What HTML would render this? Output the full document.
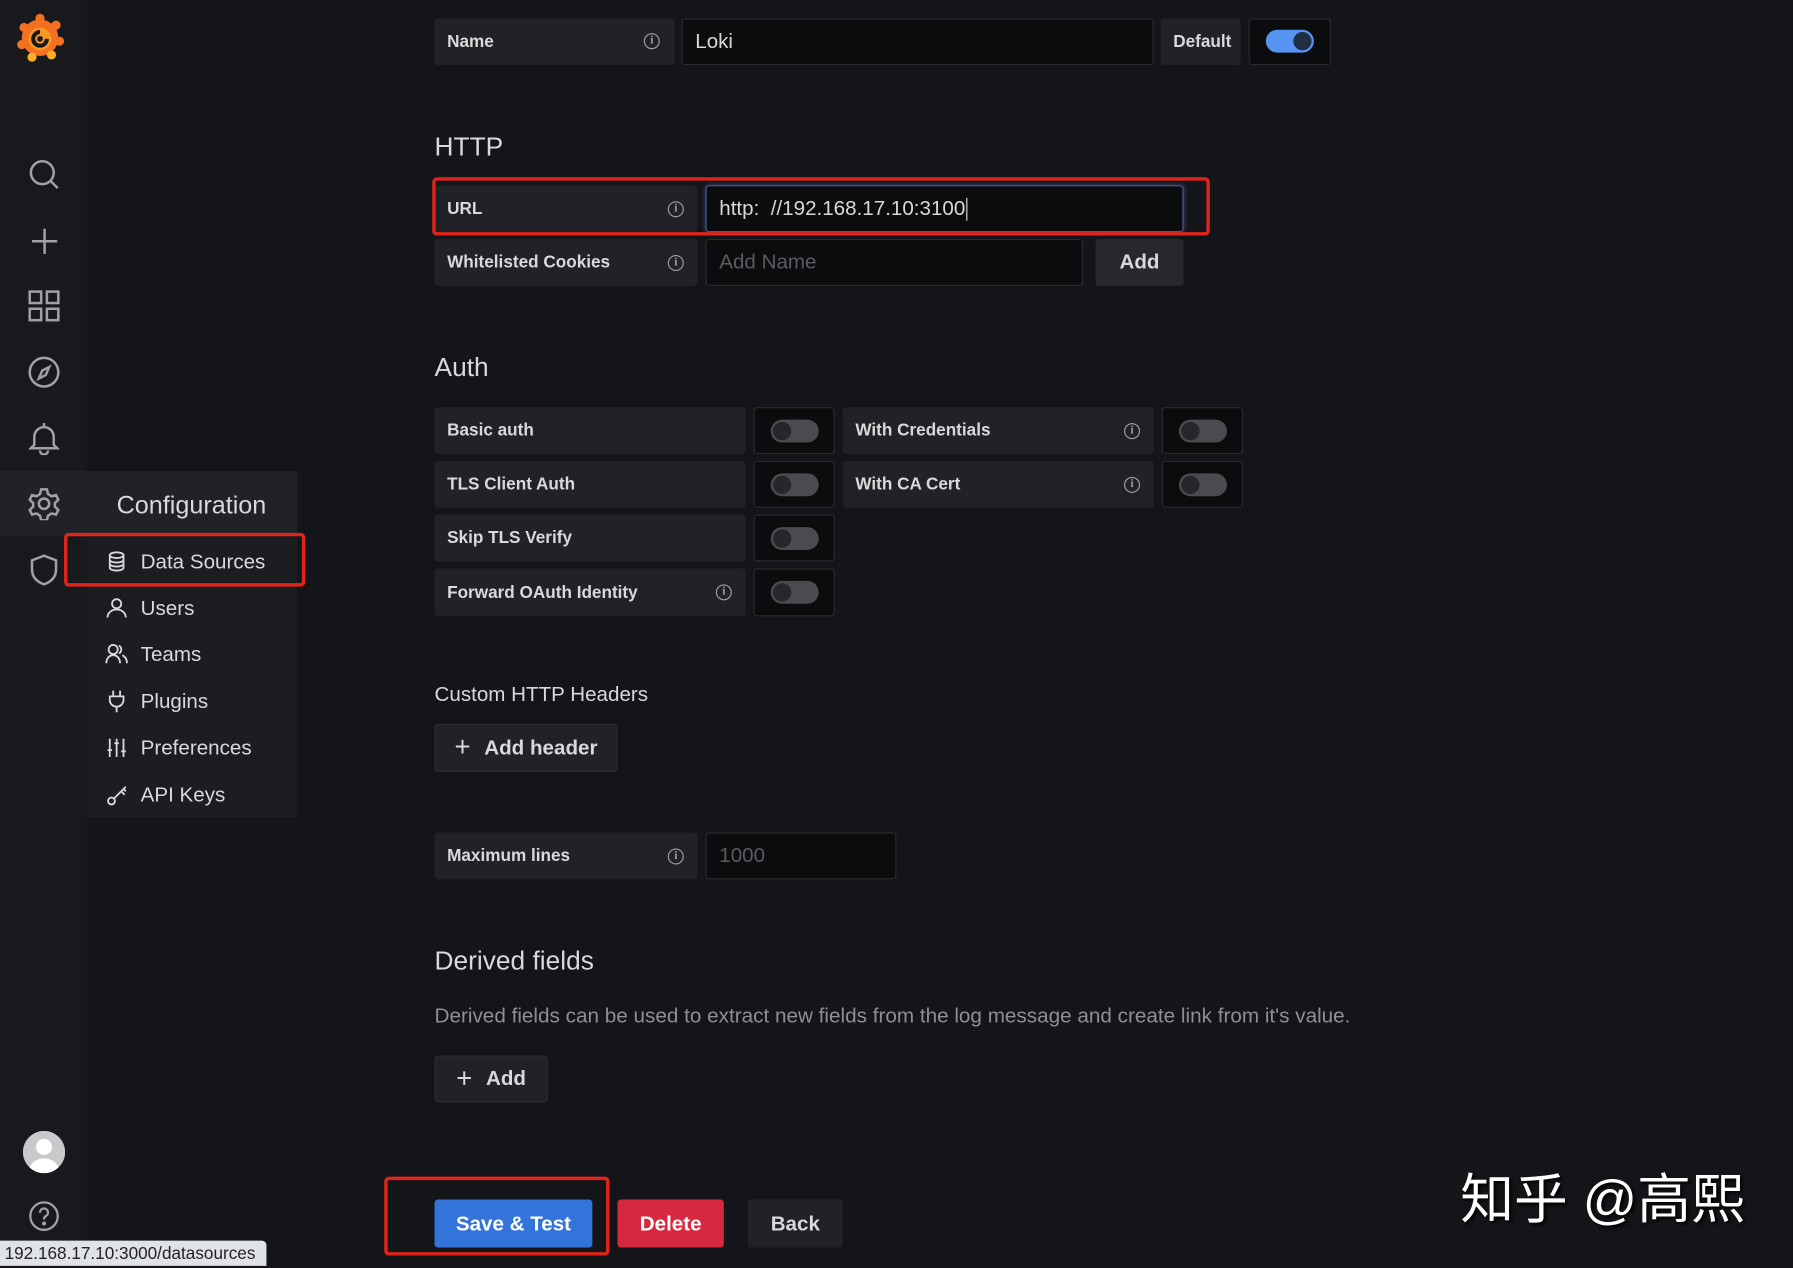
<!DOCTYPE html>
<html><head><meta charset="utf-8"><style>
html,body{margin:0;padding:0;width:1793px;height:1263px;overflow:hidden;background:#141519;}
#w{position:absolute;left:0;top:0;width:1568px;height:1105px;transform:scale(1.14349);transform-origin:0 0;background:#141519;font-family:"Liberation Sans",sans-serif;color:#d8d9da;}
.a{position:absolute;}
.sb{left:0;top:0;width:76px;height:1105px;background:#18191d;}
.lbl{position:absolute;background:#202226;border-radius:3px;font-weight:bold;font-size:15px;color:#d8d9da;box-sizing:border-box;padding-left:11px;display:flex;align-items:center;}
.inp{position:absolute;background:#0b0c0e;border:1px solid #2a2b2f;border-radius:3px;box-sizing:border-box;padding-left:11px;display:flex;align-items:center;font-size:18px;color:#d8d9da;}
.ph{color:#5a5b5f;}
.info{position:absolute;width:12px;height:12px;border:1.5px solid #9fa1a6;border-radius:50%;font-size:10px;line-height:12px;text-align:center;color:#9fa1a6;font-weight:bold;font-family:"Liberation Serif",serif;}
.tg{position:absolute;width:71px;height:41px;background:#0b0c0e;border:1px solid #2a2b2f;border-radius:3px;box-sizing:border-box;}
.tg::after{content:"";position:absolute;left:14px;top:10px;width:42px;height:20px;border-radius:10px;background:#4a4b4e;}
.tg::before{content:"";position:absolute;left:16px;top:12px;width:16px;height:16px;border-radius:50%;background:#26272a;z-index:1;}
.h{position:absolute;font-size:23px;color:#d8d9da;}
.btn{position:absolute;border-radius:3px;font-weight:bold;font-size:18px;display:flex;align-items:center;justify-content:center;box-sizing:border-box;}
.red{position:absolute;border:3px solid #e0241c;border-radius:4px;box-sizing:border-box;}
.mi{position:absolute;left:123px;font-size:18px;color:#d8d9da;}
.ic{position:absolute;}
</style></head><body><div id="w">
<div class="a sb"></div>
<!-- logo -->
<svg class="ic" style="left:14px;top:12px" width="42" height="42" viewBox="0 0 42 42"><circle cx="21" cy="21" r="16" fill="#f37021"/><g fill="#f37021"><circle cx="21" cy="4" r="4"/><circle cx="35" cy="10" r="4"/><circle cx="38" cy="24" r="4"/><circle cx="31" cy="36" r="4" fill="#fbb021"/><circle cx="14" cy="38" r="4" fill="#fbb021"/><circle cx="5" cy="27" r="4"/><circle cx="7" cy="12" r="4"/></g><circle cx="21" cy="22" r="10" fill="#fbb021" opacity=".6"/><path d="M27 22a6 6 0 1 1-6-6" stroke="#18191d" stroke-width="3.5" fill="none"/><circle cx="21" cy="22" r="2.5" fill="#18191d"/></svg>
<svg class="ic" style="left:24px;top:138px" width="30" height="30" viewBox="0 0 30 30" fill="none" stroke="#9fa1a6" stroke-width="2.2"><circle cx="13" cy="13" r="10"/><path d="M20.5 20.5l6 6"/></svg>
<svg class="ic" style="left:26px;top:198px" width="26" height="26" viewBox="0 0 26 26" stroke="#9fa1a6" stroke-width="2.2"><path d="M13 2v22M2 13h22"/></svg>
<svg class="ic" style="left:24px;top:253px" width="29" height="29" viewBox="0 0 29 29" fill="none" stroke="#9fa1a6" stroke-width="2.2"><rect x="2" y="2" width="10" height="10"/><rect x="17" y="2" width="10" height="10"/><rect x="2" y="17" width="10" height="10"/><rect x="17" y="17" width="10" height="10"/></svg>
<svg class="ic" style="left:24px;top:311px" width="29" height="29" viewBox="0 0 29 29" fill="none" stroke="#9fa1a6" stroke-width="2.2"><circle cx="14.5" cy="14.5" r="12.5"/><path d="M19 10l-3 7-6 3 3-7z"/></svg>
<svg class="ic" style="left:25px;top:368px" width="27" height="30" viewBox="0 0 27 30" fill="none" stroke="#9fa1a6" stroke-width="2.2"><path d="M13.5 2v3M5 21V14a8.5 8.5 0 0 1 17 0v7l3 3H2z"/><path d="M10 26a3.5 3.5 0 0 0 7 0"/></svg>
<div class="a" style="left:0;top:412px;width:260px;height:57px;background:#202226"></div>
<div class="a" style="left:76px;top:469px;width:184px;height:246px;background:#1c1d21"></div>
<svg class="ic" style="left:24px;top:426px" width="29" height="29" viewBox="0 0 29 29" fill="none" stroke="#9fa1a6" stroke-width="2.2"><circle cx="14.5" cy="14.5" r="4.5"/><path d="M12 2h5l1 4 3 2 4-1 2 4-3 3v3l3 3-2 4-4-1-3 2-1 4h-5l-1-4-3-2-4 1-2-4 3-3v-3l-3-3 2-4 4 1 3-2z"/></svg>
<svg class="ic" style="left:26px;top:484px" width="25" height="29" viewBox="0 0 25 29" fill="none" stroke="#9fa1a6" stroke-width="2.2"><path d="M12.5 2L23 6v8c0 7-5 11-10.5 13C7 25 2 21 2 14V6z"/></svg>
<div class="a" style="left:102px;top:429px;font-size:22px;color:#d8d9da">Configuration</div>
<svg class="ic" style="left:94px;top:482px" width="16" height="18" viewBox="0 0 16 18" fill="none" stroke="#d8d9da" stroke-width="1.6"><ellipse cx="8" cy="3.5" rx="6" ry="2.5"/><path d="M2 3.5v11c0 1.4 2.7 2.5 6 2.5s6-1.1 6-2.5v-11M2 7.5c0 1.4 2.7 2.5 6 2.5s6-1.1 6-2.5M2 11c0 1.4 2.7 2.5 6 2.5s6-1.1 6-2.5"/></svg>
<div class="mi" style="top:481px">Data Sources</div>
<svg class="ic" style="left:93px;top:523px" width="18" height="18" viewBox="0 0 18 18" fill="none" stroke="#d8d9da" stroke-width="1.6"><circle cx="9" cy="5" r="4"/><path d="M1 17c0-4 3.5-7 8-7s8 3 8 7"/></svg>
<div class="mi" style="top:522px">Users</div>
<svg class="ic" style="left:92px;top:563px" width="20" height="18" viewBox="0 0 20 18" fill="none" stroke="#d8d9da" stroke-width="1.6"><circle cx="7" cy="5" r="4"/><path d="M1 17c0-4 2.5-7 6-7s6 3 6 7M12 1.5a4 4 0 0 1 0 7M15 10c2 1 4 3 4 7"/></svg>
<div class="mi" style="top:562px">Teams</div>
<svg class="ic" style="left:95px;top:603px" width="14" height="20" viewBox="0 0 14 20" fill="none" stroke="#d8d9da" stroke-width="1.6"><path d="M4 1v5M10 1v5M1 6h12v3a6 6 0 0 1-12 0zM7 15v5"/></svg>
<div class="mi" style="top:603px">Plugins</div>
<svg class="ic" style="left:93px;top:645px" width="18" height="18" viewBox="0 0 18 18" fill="none" stroke="#d8d9da" stroke-width="1.6"><path d="M3 1v16M9 1v16M15 1v16M1 11h4M7 5h4M13 12h4"/></svg>
<div class="mi" style="top:644px">Preferences</div>
<svg class="ic" style="left:93px;top:686px" width="19" height="19" viewBox="0 0 19 19" fill="none" stroke="#d8d9da" stroke-width="1.6"><circle cx="4.5" cy="14.5" r="3"/><path d="M7 12L17 2M13 6l3 3M15 4l2 2"/></svg>
<div class="mi" style="top:685px">API Keys</div>
<div class="red" style="left:56px;top:466px;width:211px;height:47px"></div>
<svg class="ic" style="left:20px;top:989px" width="37" height="37" viewBox="0 0 37 37"><defs><clipPath id="c"><circle cx="18.5" cy="18.5" r="18.5"/></clipPath></defs><circle cx="18.5" cy="18.5" r="18.5" fill="#c8c9cb"/><g clip-path="url(#c)" fill="#fff"><circle cx="18.5" cy="14" r="7"/><ellipse cx="18.5" cy="35" rx="13" ry="11"/></g></svg>
<svg class="ic" style="left:25px;top:1050px" width="27" height="27" viewBox="0 0 27 27" fill="none" stroke="#9fa1a6" stroke-width="2"><circle cx="13.5" cy="13.5" r="12"/><path d="M10 10.5a3.5 3.5 0 1 1 5 3c-1 .6-1.5 1.3-1.5 3"/><circle cx="13.5" cy="20" r=".8" fill="#9fa1a6"/></svg>
<div class="a" style="left:0;top:1085px;width:233px;height:22px;background:#dfe2e6;border-radius:0 4px 0 0;font-size:15px;color:#222;padding-left:4px;line-height:24px;box-sizing:border-box">192.168.17.10:3000/datasources</div>

<!-- name row -->
<div class="lbl" style="left:380px;top:16px;width:210px;height:41px">Name</div><div class="info" style="left:563px;top:29px">i</div>
<div class="inp" style="left:596px;top:16px;width:413px;height:41px">Loki</div>
<div class="lbl" style="left:1015px;top:16px;width:70px;height:41px">Default</div>
<div class="a" style="left:1092px;top:16px;width:72px;height:41px;background:#0b0c0e;border:1px solid #2a2b2f;border-radius:3px;box-sizing:border-box"><div class="a" style="left:14px;top:9px;width:42px;height:20px;border-radius:10px;background:#5794f2"></div><div class="a" style="left:38px;top:11px;width:16px;height:16px;border-radius:50%;background:#1f2d45"></div></div>

<div class="h" style="left:380px;top:115px">HTTP</div>
<div class="lbl" style="left:380px;top:162px;width:230px;height:41px">URL</div><div class="info" style="left:584px;top:176px">i</div>
<div class="inp" style="left:617px;top:162px;width:418px;height:41px;border-color:#4a5a8a;box-shadow:0 0 4px #3a4a7a">http:&nbsp; //192.168.17.10:3100<span style="display:inline-block;width:1px;height:20px;background:#ddd;margin-left:1px"></span></div>
<div class="red" style="left:378px;top:155px;width:680px;height:51px"></div>
<div class="lbl" style="left:380px;top:209px;width:230px;height:41px">Whitelisted Cookies</div><div class="info" style="left:584px;top:223px">i</div>
<div class="inp" style="left:617px;top:209px;width:330px;height:41px"><span class="ph">Add Name</span></div>
<div class="btn" style="left:958px;top:209px;width:77px;height:41px;background:#26282c;color:#d8d9da">Add</div>

<div class="h" style="left:380px;top:308px">Auth</div>
<div class="lbl" style="left:380px;top:356px;width:272px;height:41px">Basic auth</div><div class="tg" style="left:659px;top:356px"></div>
<div class="lbl" style="left:737px;top:356px;width:272px;height:41px">With Credentials</div><div class="info" style="left:983px;top:370px">i</div><div class="tg" style="left:1016px;top:356px"></div>
<div class="lbl" style="left:380px;top:403px;width:272px;height:41px">TLS Client Auth</div><div class="tg" style="left:659px;top:403px"></div>
<div class="lbl" style="left:737px;top:403px;width:272px;height:41px">With CA Cert</div><div class="info" style="left:983px;top:417px">i</div><div class="tg" style="left:1016px;top:403px"></div>
<div class="lbl" style="left:380px;top:450px;width:272px;height:41px">Skip TLS Verify</div><div class="tg" style="left:659px;top:450px"></div>
<div class="lbl" style="left:380px;top:497px;width:272px;height:42px">Forward OAuth Identity</div><div class="info" style="left:626px;top:511px">i</div><div class="tg" style="left:659px;top:497px;height:42px"></div>

<div class="a" style="left:380px;top:597px;font-size:18px">Custom HTTP Headers</div>
<div class="btn" style="left:380px;top:633px;width:160px;height:42px;background:#202226;border:1px solid #2c2d31;color:#d8d9da"><span style="font-weight:normal;font-size:24px;margin-right:12px">+</span>Add header</div>

<div class="lbl" style="left:380px;top:728px;width:230px;height:41px">Maximum lines</div><div class="info" style="left:584px;top:742px">i</div>
<div class="inp" style="left:617px;top:728px;width:167px;height:41px"><span class="ph">1000</span></div>

<div class="h" style="left:380px;top:827px">Derived fields</div>
<div class="a" style="left:380px;top:878px;font-size:18.1px;color:#8e8f93;white-space:nowrap">Derived fields can be used to extract new fields from the log message and create link from it's value.</div>
<div class="btn" style="left:380px;top:923px;width:99px;height:41px;background:#202226;border:1px solid #2c2d31;color:#d8d9da"><span style="font-weight:normal;font-size:24px;margin-right:12px">+</span>Add</div>

<div class="btn" style="left:380px;top:1049px;width:138px;height:42px;background:#3274d9;color:#fff">Save &amp; Test</div>
<div class="btn" style="left:540px;top:1049px;width:93px;height:42px;background:#d8283f;color:#fff">Delete</div>
<div class="btn" style="left:654px;top:1049px;width:83px;height:42px;background:#202226;color:#d8d9da">Back</div>
<div class="red" style="left:336px;top:1029px;width:197px;height:69px"></div>

<div class="a" style="left:1277px;top:1010px;font-size:47px;color:#fff;font-family:'Liberation Sans','Noto Sans CJK SC',sans-serif;text-shadow:2px 2px 3px #000;white-space:nowrap">知乎 @高熙</div>
</div></body></html>
